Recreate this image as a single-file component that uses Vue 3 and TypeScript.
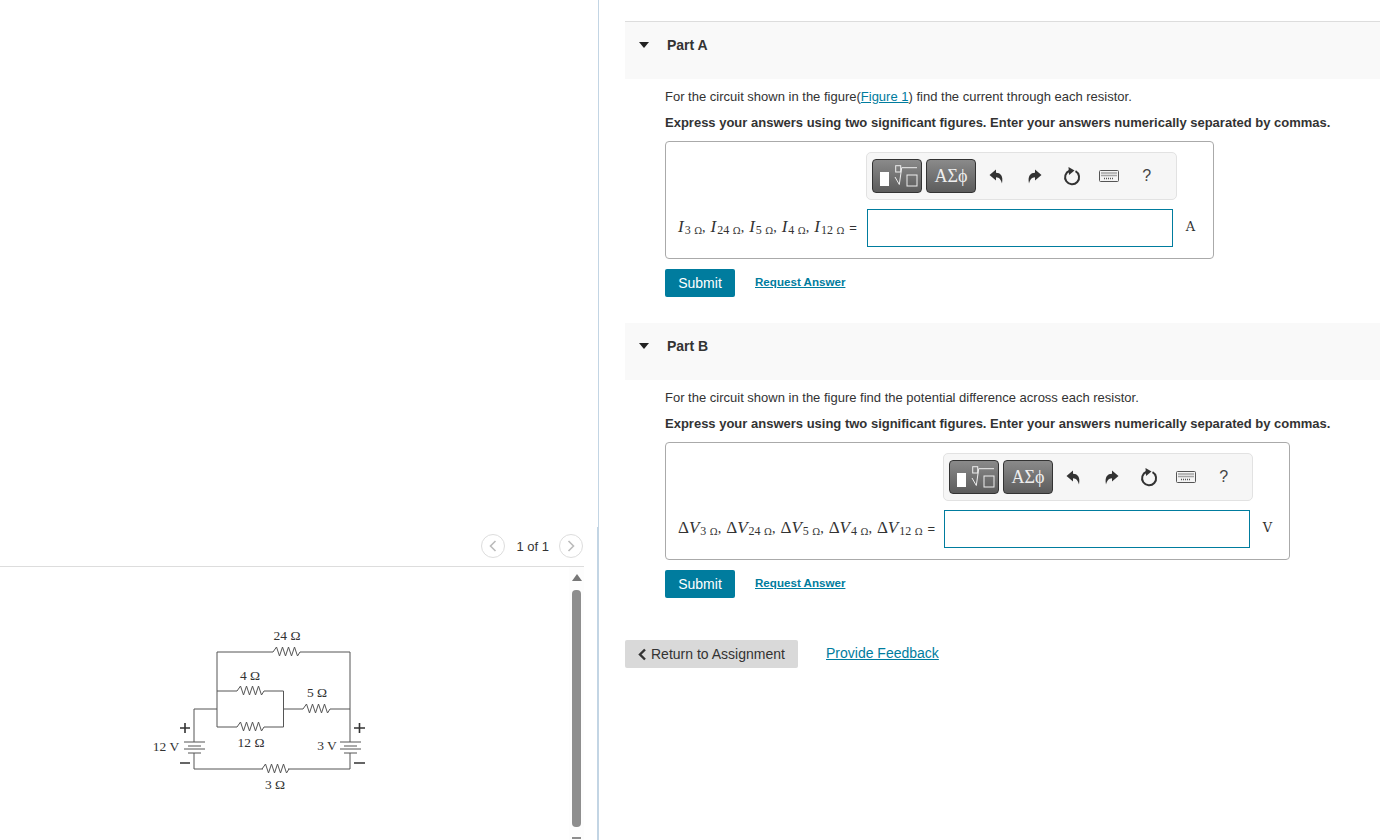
<script setup lang="ts">
interface Part {
  name: string
  width: number
  delta: boolean
  unit: string
  subs: string[]
}

const parts: Part[] = [
  { name: 'Part A', width: 549, delta: false, unit: 'A', subs: ['3', '24', '5', '4', '12'] },
  { name: 'Part B', width: 625, delta: true, unit: 'V', subs: ['3', '24', '5', '4', '12'] }
]

const labels = [
  { text: '24 Ω', x: 287, y: 640 },
  { text: '4 Ω', x: 250, y: 680 },
  { text: '5 Ω', x: 317, y: 697 },
  { text: '12 Ω', x: 251, y: 747 },
  { text: '12 V', x: 166, y: 751 },
  { text: '3 V', x: 327, y: 750 },
  { text: '3 Ω', x: 275, y: 789 }
]

// zigzag of a resistor, starts at x,y and is 27px long
function zig(x: number, y: number) {
  let d = `M${x} ${y}`
  for (let i = 0; i < 4; i++) {
    const s = x + 2 + i * 6
    d += ` L${s + 1.5} ${y - 5} L${s + 4.5} ${y + 4}`
  }
  return d + ` L${x + 27} ${y}`
}
</script>

<template>
  <div class="page">
    <section class="left">
      <div class="lower">
        <div class="pager">
          <span class="round">
            <svg width="8" height="12" viewBox="0 0 8 12"><path d="M6.5 1 L1.5 6 L6.5 11" /></svg>
          </span>
          <span class="count">1 of 1</span>
          <span class="round">
            <svg width="8" height="12" viewBox="0 0 8 12"><path d="M1.5 1 L6.5 6 L1.5 11" /></svg>
          </span>
        </div>
        <div class="viewer">
          <div class="figure">
            <svg class="circuit" width="250" height="180" viewBox="130 620 250 180">
              <g class="wire">
                <path d="M273 652 H217 V727 H237 M264 727 H283.5 V691 H264 M237 691 H217" />
                <path d="M300 652 H350 V742 M350 753 V769 H288 M263 769 H194 V753 M194 742 V709 H217" />
                <path d="M283.5 709 H303 M330 709 H350" />
                <path :d="zig(273, 652)" />
                <path :d="zig(237, 691)" />
                <path :d="zig(237, 727)" />
                <path :d="zig(303, 709)" />
                <path :d="zig(262, 769)" />
                <path d="M184 742 H205 M188 746 H201 M184 749 H205 M188 753 H201" />
                <path d="M340 742 H361 M344 746 H357 M340 749 H361 M344 753 H357" />
                <path class="sign" d="M180 728 H190 M185 723 V733 M180 763 H190 M354 728 H365 M359.5 723 V733 M354 763 H365" />
              </g>
              <text v-for="l in labels" :key="l.text" class="fig-label" :x="l.x" :y="l.y">{{ l.text }}</text>
            </svg>
          </div>
          <div class="rail">
            <span class="rail-up"></span>
            <span class="rail-thumb"></span>
            <span class="rail-end"></span>
          </div>
        </div>
      </div>
    </section>

    <main class="right">
      <div v-for="(part, i) in parts" :key="part.name" class="part">
        <div class="part-head" :class="{ 'part-head--first': i === 0 }">
          <span class="caret"></span>
          <h2>{{ part.name }}</h2>
        </div>
        <div class="part-body">
          <p v-if="i === 0" class="prompt">
            For the circuit shown in the figure(<a href="#">Figure 1</a>) find the current through each resistor.
          </p>
          <p v-else class="prompt">For the circuit shown in the figure find the potential difference across each resistor.</p>
          <p class="hint">Express your answers using two significant figures. Enter your answers numerically separated by commas.</p>

          <div class="answer" :style="{ width: `${part.width}px` }">
            <div class="toolbar">
              <button class="tool">
                <svg width="46" height="30" viewBox="0 0 46 30">
                  <rect x="6" y="11" width="9" height="14" fill="#fff" />
                  <rect class="ol" x="21.7" y="4.7" width="5" height="6.3" />
                  <path class="ol" d="M21 16 L25.3 23.5 L27.7 6.7 H43" />
                  <rect class="ol" x="33" y="14" width="10" height="11" />
                </svg>
              </button>
              <button class="tool tool--greek">ΑΣϕ</button>
              <span class="slot">
                <svg width="15" height="15" viewBox="0 0 15 15"><path d="M0.5 6 L7 0.5 V3.8 C11.5 3.8 14.5 7 13 14.5 C12 10.5 10.5 8.5 7 8.2 V11.5 Z" fill="#333" /></svg>
              </span>
              <span class="slot">
                <svg width="15" height="15" viewBox="0 0 15 15"><path d="M14.5 6 L8 0.5 V3.8 C3.5 3.8 0.5 7 2 14.5 C3 10.5 4.5 8.5 8 8.2 V11.5 Z" fill="#333" /></svg>
              </span>
              <span class="slot">
                <svg width="18" height="20" viewBox="0 0 18 20">
                  <path d="M6.5 4.8 A7 7 0 1 0 12.5 5.2" fill="none" stroke="#333" stroke-width="2" />
                  <path d="M5.5 1 L11.5 4.5 L6 9 Z" fill="#333" />
                </svg>
              </span>
              <span class="slot">
                <svg width="20" height="12" viewBox="0 0 20 12">
                  <rect x="0.5" y="0.5" width="19" height="11" rx="1" fill="#f4f4f4" stroke="#555" />
                  <path d="M2.5 3 H17.5 M2.5 5.5 H17.5 M5 8.5 H15" stroke="#555" stroke-width="1.6" stroke-dasharray="1 1" />
                </svg>
              </span>
              <span class="slot slot--help">?</span>
            </div>
            <div class="row">
              <div class="math">
                <template v-for="(s, k) in part.subs" :key="s">
                  <span v-if="part.delta" class="delta">Δ</span><i>{{ part.delta ? 'V' : 'I' }}</i><span class="sub">{{ s }}<span class="ohm">Ω</span></span><span v-if="k < part.subs.length - 1" class="comma">,</span>
                </template>
                <span class="equals">=</span>
              </div>
              <div class="field"></div>
              <div class="unit">{{ part.unit }}</div>
            </div>
          </div>

          <div class="actions">
            <button class="submit">Submit</button>
            <a href="#" class="request">Request Answer</a>
          </div>
        </div>
      </div>

      <div class="footer">
        <button class="back">
          <svg width="10" height="13" viewBox="0 0 10 13"><path d="M8 1.5 L3 6.5 L8 11.5" /></svg>
          Return to Assignment
        </button>
        <a href="#" class="feedback">Provide Feedback</a>
      </div>
    </main>
  </div>
</template>

<style>
html, body { margin: 0; background: #fff; }
</style>

<style scoped>
.page {
  display: flex;
  width: 1380px;
  height: 840px;
  overflow: hidden;
  font-family: "Liberation Sans", Arial, sans-serif;
  color: #333;
}

/* left pane */
.left {
  width: 598px;
  flex-shrink: 0;
  display: flex;
  flex-direction: column;
  justify-content: flex-end;
  border-right: 1px solid #c3d5e4;
}
.lower {
  height: 313px;
  padding-right: 13px;
  border-right: 1px solid #c3d5e4;
  display: flex;
  flex-direction: column;
}
.pager {
  height: 40px;
  flex-shrink: 0;
  box-sizing: border-box;
  border-bottom: 1px solid #ddd;
  display: flex;
  align-items: center;
  justify-content: flex-end;
  padding: 0 1px 2px 0;
  color: #333;
}
.round {
  width: 24px;
  height: 24px;
  box-sizing: border-box;
  border: 1px solid #ddd;
  border-radius: 50%;
  display: flex;
  align-items: center;
  justify-content: center;
}
.round path { fill: none; stroke: #bbb; stroke-width: 1.6; }
.count { font-size: 13px; margin: 2px 10px 0 11px; }
.viewer { flex: 1; display: flex; min-height: 0; }
.figure { flex: 1; padding: 53px 0 0 130px; }
.circuit { display: block; }
.wire path { fill: none; stroke: #555; stroke-width: 1; }
.wire .sign { stroke: #333; stroke-width: 1.6; }
.fig-label {
  font-family: "Liberation Serif", serif;
  font-size: 13.5px;
  fill: #333;
  text-anchor: middle;
}
.rail {
  width: 15px;
  background: #fdfdfd;
  display: flex;
  flex-direction: column;
  align-items: center;
}
.rail-up {
  margin-top: 7px;
  border-left: 5px solid transparent;
  border-right: 5px solid transparent;
  border-bottom: 7px solid #777;
}
.rail-thumb {
  width: 9px;
  height: 237px;
  margin-top: 9px;
  background: #8e8e8e;
  border-radius: 4px;
}
.rail-end { width: 9px; height: 2px; margin-top: 10px; background: #8e8e8e; }

/* right pane */
.right { flex: 1; padding: 21px 0 0 26px; min-width: 0; }
.part-head {
  height: 57px;
  box-sizing: border-box;
  background: #f9f9f9;
  display: flex;
  align-items: center;
  padding: 0 0 11px 14px;
}
.part-head--first { height: 58px; border-top: 1px solid #ddd; }
.caret {
  border-left: 5.5px solid transparent;
  border-right: 5.5px solid transparent;
  border-top: 6px solid #222;
}
.part-head h2 {
  margin: 0 0 0 18px;
  font-size: 14px;
  line-height: 16px;
  font-weight: 700;
  color: #333;
}
.part-body { padding: 10px 0 0 40px; height: 234px; }
.prompt, .hint { margin: 0; font-size: 13px; line-height: 16px; color: #333; }
.hint { margin-top: 10px; font-weight: 700; }
.prompt a { color: #007c9e; }
.answer {
  box-sizing: border-box;
  height: 118px;
  margin-top: 10px;
  border: 1px solid #aaa;
  border-radius: 4px;
  padding: 10px 0 0 12px;
  display: flex;
  flex-direction: column;
}
.toolbar {
  align-self: flex-end;
  box-sizing: border-box;
  width: 311px;
  height: 48px;
  margin-right: 36px;
  padding: 6px 0 0 5px;
  background: #f6f6f6;
  border: 1px solid #e2e2e2;
  border-radius: 5px;
  display: flex;
}
.part + .part .toolbar { width: 310px; }
.tool {
  width: 50px;
  height: 34px;
  padding: 0;
  margin-right: 4px;
  display: flex;
  align-items: center;
  justify-content: center;
  border: 1px solid #333;
  border-radius: 4px;
  background: linear-gradient(#8a8a8a, #5c5c5c);
  color: #eee;
}
.tool--greek {
  font-family: "Liberation Serif", serif;
  font-size: 18px;
  margin-right: 2px;
}
.ol { fill: none; stroke: #eee; stroke-width: 1; }
.slot {
  width: 37.5px;
  height: 34px;
  display: flex;
  align-items: center;
  justify-content: center;
}
.slot--help { font-size: 16px; color: #444; }
.row { display: flex; align-items: center; margin-top: 9px; }
.math {
  flex: 1;
  white-space: nowrap;
  font-family: "Liberation Serif", serif;
  font-size: 17px;
  color: #333;
  padding-bottom: 2px;
}
.delta { font-size: 17px; }
.sub { font-size: 12px; position: relative; top: 2px; margin-left: 1px; }
.ohm { font-family: "DejaVu Serif", serif; font-size: 9.5px; margin-left: 3.5px; }
.comma { font-size: 14px; margin-right: 5px; }
.equals { font-family: "Liberation Sans", sans-serif; font-size: 13px; margin-left: 5px; }
.field {
  width: 306px;
  height: 38px;
  box-sizing: border-box;
  border: 1px solid #007c9e;
  flex-shrink: 0;
}
.unit {
  width: 35px;
  margin-right: 5px;
  flex-shrink: 0;
  text-align: center;
  font-family: "DejaVu Serif", serif;
  font-size: 13px;
  color: #333;
  padding-bottom: 3px;
}
.part + .part .unit { margin-right: 4px; }
.actions { display: flex; align-items: center; margin-top: 10px; }
.submit {
  width: 70px;
  height: 28px;
  padding: 0;
  border: none;
  border-radius: 2px;
  background: #007c9e;
  color: #fff;
  font-family: inherit;
  font-size: 14px;
}
.request {
  margin: 0 0 4px 20px;
  color: #007c9e;
  font-size: 11.6px;
  font-weight: 700;
}
.footer { display: flex; align-items: flex-start; margin-top: 16px; }
.back {
  width: 173px;
  height: 28px;
  padding: 0 0 0 12px;
  border: none;
  border-radius: 2px;
  background: #d9d9d9;
  color: #333;
  font-family: inherit;
  font-size: 14px;
  display: flex;
  align-items: center;
  gap: 4px;
}
.back path { fill: none; stroke: #333; stroke-width: 2.4; }
.feedback { margin: 4px 0 0 28px; font-size: 14px; line-height: 18px; color: #007c9e; }
</style>
